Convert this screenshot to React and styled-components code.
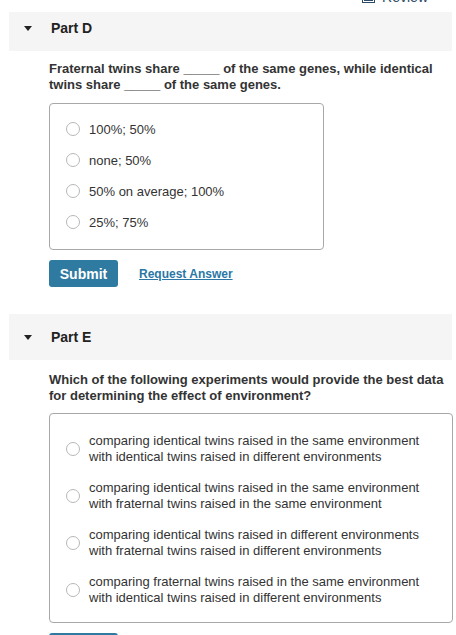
import React from 'react';
import styled, { createGlobalStyle } from 'styled-components';

const GlobalStyle = createGlobalStyle`
  body {
    margin: 0;
    background: #fff;
    font-family: "Liberation Sans", Arial, Helvetica, sans-serif;
    color: #333;
  }
`;

const Page = styled.div`
  width: 456px;
  height: 635px;
  overflow: hidden;
  padding: 0 4px 0 9px;
  box-sizing: border-box;
`;

const ReviewBar = styled.div`
  height: 4px;
  overflow: hidden;
  display: flex;
  justify-content: flex-end;
  padding-right: 24px;
`;

const ReviewLink = styled.div`
  display: flex;
  align-items: center;
  gap: 7px;
  margin-top: -11px;
  font-size: 14px;
  color: #2d4a66;
`;

const PartHeader = styled.div`
  margin-top: ${(p) => p.$top}px;
  height: ${(p) => p.$height}px;
  padding-bottom: ${(p) => p.$shift}px;
  background: #f5f5f5;
  display: flex;
  align-items: center;
  box-sizing: border-box;
`;

const Caret = styled.span`
  width: 0;
  height: 0;
  margin-left: 15px;
  margin-right: 19px;
  border-left: 4px solid transparent;
  border-right: 4px solid transparent;
  border-top: 5px solid #222;
`;

const PartTitle = styled.h2`
  margin: 0;
  font-size: 14px;
  font-weight: bold;
  color: #222;
`;

const Body = styled.div`
  padding-left: 40px;
`;

const Question = styled.p`
  margin: ${(p) => p.$top}px 0 0;
  font-size: 13px;
  font-weight: bold;
  line-height: 16px;
  color: #333;
`;

const OptionBox = styled.div`
  margin-top: ${(p) => p.$top}px;
  width: ${(p) => p.$width}px;
  border: 1px solid #a8a8a8;
  border-radius: 4px;
  padding: ${(p) => p.$pad};
  box-sizing: border-box;
`;

const Option = styled.label`
  display: flex;
  align-items: center;
  height: ${(p) => p.$height}px;
  padding-left: 16px;
  font-size: 13px;
  line-height: 16px;
  color: #333;
`;

const Radio = styled.span`
  flex: none;
  width: 14px;
  height: 14px;
  border-radius: 50%;
  border: 1px solid #b8b8b8;
  box-sizing: border-box;
  background: #fff;
  margin-right: 9px;
  margin-top: ${(p) => (p.$twoLine ? 0 : -1)}px;
`;

const Actions = styled.div`
  margin-top: 10px;
  display: flex;
  align-items: center;
  gap: 21px;
`;

const SubmitButton = styled.button`
  width: 69px;
  height: 27px;
  border: none;
  border-radius: 3px;
  background: #2f7aa1;
  color: #fff;
  font-family: inherit;
  font-size: 14px;
  font-weight: bold;
  padding: 0;
`;

const RequestLink = styled.a`
  font-size: 12px;
  font-weight: bold;
  color: #2a77a6;
  text-decoration: underline;
`;

const ReviewIcon = () => (
  <svg width="13" height="12" viewBox="0 0 13 12">
    <rect x="0.5" y="0.5" width="12" height="11" fill="none" stroke="#2d4a66" />
    <rect x="2" y="8" width="9" height="2" fill="#2d4a66" />
  </svg>
);

const partD = ['100%; 50%', 'none; 50%', '50% on average; 100%', '25%; 75%'];

const partE = [
  ['comparing identical twins raised in the same environment', 'with identical twins raised in different environments'],
  ['comparing identical twins raised in the same environment', 'with fraternal twins raised in the same environment'],
  ['comparing identical twins raised in different environments', 'with fraternal twins raised in different environments'],
  ['comparing fraternal twins raised in the same environment', 'with identical twins raised in different environments'],
];

export default function App() {
  return (
    <Page>
      <GlobalStyle />
      <ReviewBar>
        <ReviewLink>
          <ReviewIcon />
          Review
        </ReviewLink>
      </ReviewBar>

      <PartHeader $top={8} $height={39} $shift={7}>
        <Caret />
        <PartTitle>Part D</PartTitle>
      </PartHeader>
      <Body>
        <Question $top={10}>
          Fraternal twins share _____ of the same genes, while identical twins share _____ of the same genes.
        </Question>
        <OptionBox $top={10} $width={275} $pad="10px 0 11px">
          {partD.map((t) => (
            <Option key={t} $height={31}>
              <Radio />
              {t}
            </Option>
          ))}
        </OptionBox>
        <Actions>
          <SubmitButton>Submit</SubmitButton>
          <RequestLink>Request Answer</RequestLink>
        </Actions>
      </Body>

      <PartHeader $top={27} $height={46} $shift={0}>
        <Caret />
        <PartTitle>Part E</PartTitle>
      </PartHeader>
      <Body>
        <Question $top={12}>
          Which of the following experiments would provide the best data for determining the effect of environment?
        </Question>
        <OptionBox $top={9} $width={404} $pad="11px 0 9px">
          {partE.map(([a, b]) => (
            <Option key={a + b} $height={47}>
              <Radio $twoLine />
              <span>
                {a}
                <br />
                {b}
              </span>
            </Option>
          ))}
        </OptionBox>
        <Actions>
          <SubmitButton>Submit</SubmitButton>
        </Actions>
      </Body>
    </Page>
  );
}
